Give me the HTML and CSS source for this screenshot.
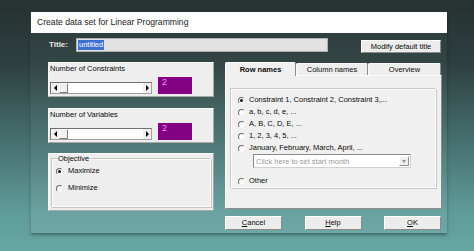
FILE: index.html
```html
<!DOCTYPE html>
<html>
<head>
<meta charset="utf-8">
<link rel="stylesheet" href="styles.css">
</head>
<body>
<div class="page">
  <div class="dialog">
    <div class="titlebar">Create data set for Linear Programming</div>
    <div class="body">
      <div class="title-row">
        <span class="title-label">Title:</span>
        <div class="title-input"><span class="sel">untitled</span></div>
        <div class="btn modify">Modify default title</div>
      </div>
      <div class="columns">
        <div class="left">
          <div class="group">
            <div class="glabel">Number of Constraints</div>
            <div class="grow">
              <div class="scroll">
                <span class="sbtn"><span class="arr-l"></span></span>
                <span class="thumb"></span>
                <span class="track"></span>
                <span class="sbtn"><span class="arr-r"></span></span>
              </div>
              <div class="num">2</div>
            </div>
          </div>
          <div class="group g2">
            <div class="glabel">Number of Variables</div>
            <div class="grow">
              <div class="scroll">
                <span class="sbtn"><span class="arr-l"></span></span>
                <span class="thumb"></span>
                <span class="track"></span>
                <span class="sbtn"><span class="arr-r"></span></span>
              </div>
              <div class="num">2</div>
            </div>
          </div>
          <div class="objective">
            <div class="fset">
              <span class="legend">Objective</span>
              <div class="radio obj-r"><span class="dot on"></span>Maximize</div>
              <div class="radio obj-r r2"><span class="dot"></span>Minimize</div>
            </div>
          </div>
        </div>
        <div class="right">
          <div class="tabs">
            <div class="tab active">Row names</div>
            <div class="tab">Column names</div>
            <div class="tab">Overview</div>
          </div>
          <div class="tabpanel">
            <div class="inner">
              <div class="radio"><span class="dot on"></span>Constraint 1, Constraint 2, Constraint 3,...</div>
              <div class="radio"><span class="dot"></span>a, b, c, d, e, ...</div>
              <div class="radio"><span class="dot"></span>A, B, C, D, E, ...</div>
              <div class="radio"><span class="dot"></span>1, 2, 3, 4, 5, ...</div>
              <div class="radio"><span class="dot"></span>January, February, March, April, ...</div>
              <div class="combo"><span class="ph">Click here to set start month</span><span class="cbtn"><span class="arr-d"></span></span></div>
              <div class="radio other"><span class="dot"></span>Other</div>
            </div>
          </div>
          <div class="buttons">
            <div class="btn act"><u>C</u>ancel</div>
            <div class="btn act"><u>H</u>elp</div>
            <div class="btn act"><u>O</u>K</div>
          </div>
        </div>
      </div>
    </div>
  </div>
</div>
</body>
</html>
```
FILE: styles.css
```css
html, body {
  margin: 0;
  padding: 0;
}
body {
  width: 474px;
  height: 251px;
  overflow: hidden;
  font-family: "Liberation Sans", Arial, sans-serif;
  font-size: 7.5px;
  color: #0a0a0a;
  background: linear-gradient(to bottom, #263131 0%, #2d3f3f 25%, #456e6d 55%, #5f9c9a 85%, #66a6a3 100%);
}
.page {
  padding: 12px 0 0 31px;
}
.dialog {
  width: 416px;
  height: 221px;
  background: linear-gradient(to bottom, rgba(255,255,255,0.02), rgba(255,255,255,0.07));
  box-shadow: 0 2px 3px rgba(0,0,0,0.35), -1px 0 0 rgba(255,255,255,0.08);
  display: flex;
  flex-direction: column;
}
.titlebar {
  height: 21px;
  background: #ffffff;
  font-size: 8.6px;
  line-height: 21px;
  padding-left: 6px;
  color: #1a1a1a;
}
.body {
  padding: 5px 5px 0 17px;
}
.title-row {
  display: flex;
  align-items: flex-start;
  height: 15px;
}
.title-label {
  width: 27px;
  padding-left: 1px;
  font-weight: bold;
  font-size: 8px;
  color: #e8e8e8;
  line-height: 14px;
}
.title-input {
  width: 249px;
  height: 12px;
  background: #e2e2e2;
  border: 1px solid #b0b0b0;
  display: flex;
  align-items: center;
  padding-left: 1px;
}
.sel {
  background: #3d6fd1;
  color: #fff;
  line-height: 10px;
  padding: 0 1px;
}
.btn {
  background: #ececec;
  border: 1px solid #fff;
  border-right-color: #8a8a8a;
  border-bottom-color: #8a8a8a;
  text-align: center;
  color: #0a0a0a;
  box-sizing: border-box;
}
.modify {
  width: 80px;
  height: 13px;
  line-height: 11px;
  margin-left: 33px;
  margin-top: 2px;
}
.columns {
  display: flex;
  margin-top: 9px;
  gap: 11px;
}
.left {
  width: 166px;
  display: flex;
  flex-direction: column;
}
.group {
  height: 35px;
  background: #eeeeee;
  border: 1px solid #f8f8f8;
  border-right-color: #a8a8a8;
  border-bottom-color: #a8a8a8;
  box-sizing: border-box;
  padding: 1px 0 0 1px;
}
.g2 {
  margin-top: 11px;
}
.glabel {
  line-height: 10px;
  height: 11px;
}
.grow {
  display: flex;
  align-items: flex-end;
  margin-top: 2px;
}
.scroll {
  width: 102px;
  height: 12px;
  display: flex;
  box-sizing: border-box;
  border: 1px solid #a0a0a0;
  border-top-color: #707070;
  border-left-color: #707070;
  background: #fff;
}
.sbtn {
  width: 8px;
  height: 10px;
  background: #f0f0f0;
  display: flex;
  align-items: center;
  justify-content: center;
}
.thumb {
  width: 9px;
  height: 10px;
  box-sizing: border-box;
  background: #f0f0f0;
  border: 1px solid #fff;
  border-right-color: #808080;
  border-bottom-color: #808080;
}
.track {
  flex: 1;
  background: #ffffff;
}
.arr-l {
  width: 0;
  height: 0;
  border-top: 3px solid transparent;
  border-bottom: 3px solid transparent;
  border-right: 3px solid #000;
}
.arr-r {
  width: 0;
  height: 0;
  border-top: 3px solid transparent;
  border-bottom: 3px solid transparent;
  border-left: 3px solid #000;
}
.num {
  width: 34px;
  height: 17px;
  margin-left: 6px;
  background: #820082;
  color: #ff8cff;
  font-size: 9px;
  line-height: 10px;
  padding-left: 4px;
  box-sizing: border-box;
}
.objective {
  margin-top: 10px;
  height: 58px;
  background: #eeeeee;
  border: 1px solid #f8f8f8;
  border-right-color: #a8a8a8;
  border-bottom-color: #a8a8a8;
  box-sizing: border-box;
  padding: 4px 2px 3px 2px;
}
.fset {
  height: 100%;
  box-sizing: border-box;
  border: 1px solid #c4c4c4;
  border-right-color: #fafafa;
  border-bottom-color: #fafafa;
  box-shadow: inset 1px 1px 0 #fafafa, 1px 1px 0 #c4c4c4;
  padding-left: 4px;
}
.legend {
  display: block;
  width: max-content;
  margin-top: -5px;
  margin-left: 1px;
  padding: 0 1px;
  background: #eeeeee;
  line-height: 9px;
}
.radio {
  display: flex;
  align-items: center;
  height: 12px;
  line-height: 12px;
  white-space: nowrap;
}
.obj-r {
  margin-top: 2px;
  height: 12px;
}
.obj-r .dot {
  margin-right: 5px;
}
.r2 {
  margin-top: 5px;
}
.dot {
  width: 7px;
  height: 7px;
  border-radius: 50%;
  box-sizing: border-box;
  border: 1px solid #6a6a6a;
  border-right-color: #f4f4f4;
  border-bottom-color: #f4f4f4;
  background: #fff;
  margin-right: 4px;
  display: flex;
  align-items: center;
  justify-content: center;
  flex: none;
}
.dot.on::after {
  content: "";
  width: 3px;
  height: 3px;
  border-radius: 50%;
  background: #111;
}
.right {
  width: 217px;
  display: flex;
  flex-direction: column;
}
.tabs {
  display: flex;
  height: 13px;
  align-items: flex-end;
  position: relative;
  z-index: 1;
}
.tab {
  width: 72px;
  height: 12px;
  box-sizing: border-box;
  background: #eeeeee;
  border: 1px solid #fafafa;
  border-right-color: #8c8c8c;
  border-bottom: none;
  border-radius: 2px 2px 0 0;
  text-align: center;
  line-height: 11px;
}
.tab:last-child {
  width: 73px;
}
.tab.active {
  width: 71px;
  height: 14px;
  margin-bottom: -1px;
  font-weight: bold;
  line-height: 13px;
  background: #f0f0f0;
}
.tabpanel {
  height: 134px;
  box-sizing: border-box;
  background: #f0f0f0;
  border: 1px solid #fafafa;
  border-right-color: #8c8c8c;
  border-bottom-color: #8c8c8c;
  padding: 12px 5px 0 4px;
}
.inner {
  height: 100px;
  box-sizing: border-box;
  border: 1px solid #c8c8c8;
  border-right-color: #fcfcfc;
  border-bottom-color: #fcfcfc;
  box-shadow: inset 1px 1px 0 #fcfcfc, 1px 1px 0 #c8c8c8;
  padding: 5px 0 0 7px;
}
.combo {
  width: 158px;
  height: 14px;
  margin-left: 15px;
  box-sizing: border-box;
  background: #ffffff;
  border: 1px solid #8a8a8a;
  border-right-color: #d0d0d0;
  border-bottom-color: #d0d0d0;
  display: flex;
  align-items: center;
  justify-content: space-between;
  padding-left: 2px;
}
.ph {
  color: #9a9a9a;
}
.cbtn {
  width: 10px;
  height: 10px;
  margin-right: 1px;
  box-sizing: border-box;
  background: #efefef;
  border: 1px solid #fff;
  border-right-color: #909090;
  border-bottom-color: #909090;
  display: flex;
  align-items: center;
  justify-content: center;
}
.arr-d {
  width: 0;
  height: 0;
  border-left: 2.5px solid transparent;
  border-right: 2.5px solid transparent;
  border-top: 3px solid #909090;
}
.other {
  margin-top: 7px;
}
.buttons {
  display: flex;
  justify-content: space-between;
  margin-top: 7px;
  padding-right: 1px;
}
.act {
  width: 57px;
  height: 14px;
  line-height: 12px;
}
.act u {
  text-decoration: underline;
}
```
